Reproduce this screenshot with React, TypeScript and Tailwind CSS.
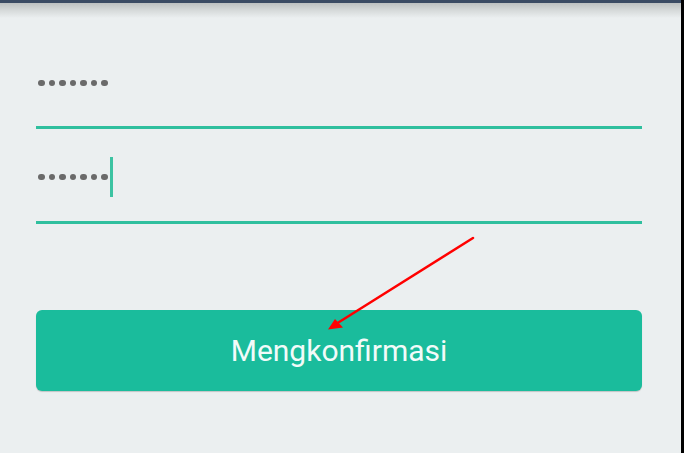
import React from 'react';

function PasswordDots({ count }: { count: number }) {
  return (
    <div className="flex items-center gap-[4px] pl-[2px]">
      {Array.from({ length: count }).map((_, i) => (
        <span key={i} className="block h-[6.5px] w-[6.5px] rounded-full bg-[#6a6a6a]" />
      ))}
    </div>
  );
}

export default function App() {
  return (
    <div className="flex h-[453px] w-[684px] bg-black font-['Roboto','Liberation_Sans',sans-serif]">
      <div className="relative h-full w-[681px] bg-[#ebeff0]">
        <div className="h-[3px] bg-[#3a4b63]" />
        {/* toolbar shadow */}
        <div className="pointer-events-none absolute left-0 right-0 top-[3px] h-[15px] bg-gradient-to-b from-[#bcc0c0] via-[#d6dada] to-[#ebeff0]" />

        <div className="ml-[36px] w-[606px]">
          <div className="mt-[60px] flex h-[40px] items-center">
            <PasswordDots count={7} />
          </div>
          <div className="mt-[23px] h-[3px] bg-[#2fbf9e]" />

          <div className="mt-[28px] flex h-[40px] items-center">
            <PasswordDots count={7} />
            <span className="ml-[2px] block h-[40px] w-[3px] bg-[#3cc3a2]" />
          </div>
          <div className="mt-[24px] h-[3px] bg-[#2fbf9e]" />

          <button className="mt-[86px] flex h-[81px] w-full items-center justify-center rounded-[6px] bg-[#1abc9c] text-[30px] leading-none text-[#f2fbf9] shadow-[0_1px_1px_rgba(0,0,0,0.18)]">
            Mengkonfirmasi
          </button>
        </div>

        {/* annotation arrow */}
        <svg className="pointer-events-none absolute left-0 top-0" width="681" height="453">
          <line x1="473" y1="238" x2="336" y2="324" stroke="#ff0000" strokeWidth="2.5" strokeLinecap="round" />
          <polygon points="328,329.5 335,319 343,327.5" fill="#ff0000" />
        </svg>
      </div>
    </div>
  );
}
